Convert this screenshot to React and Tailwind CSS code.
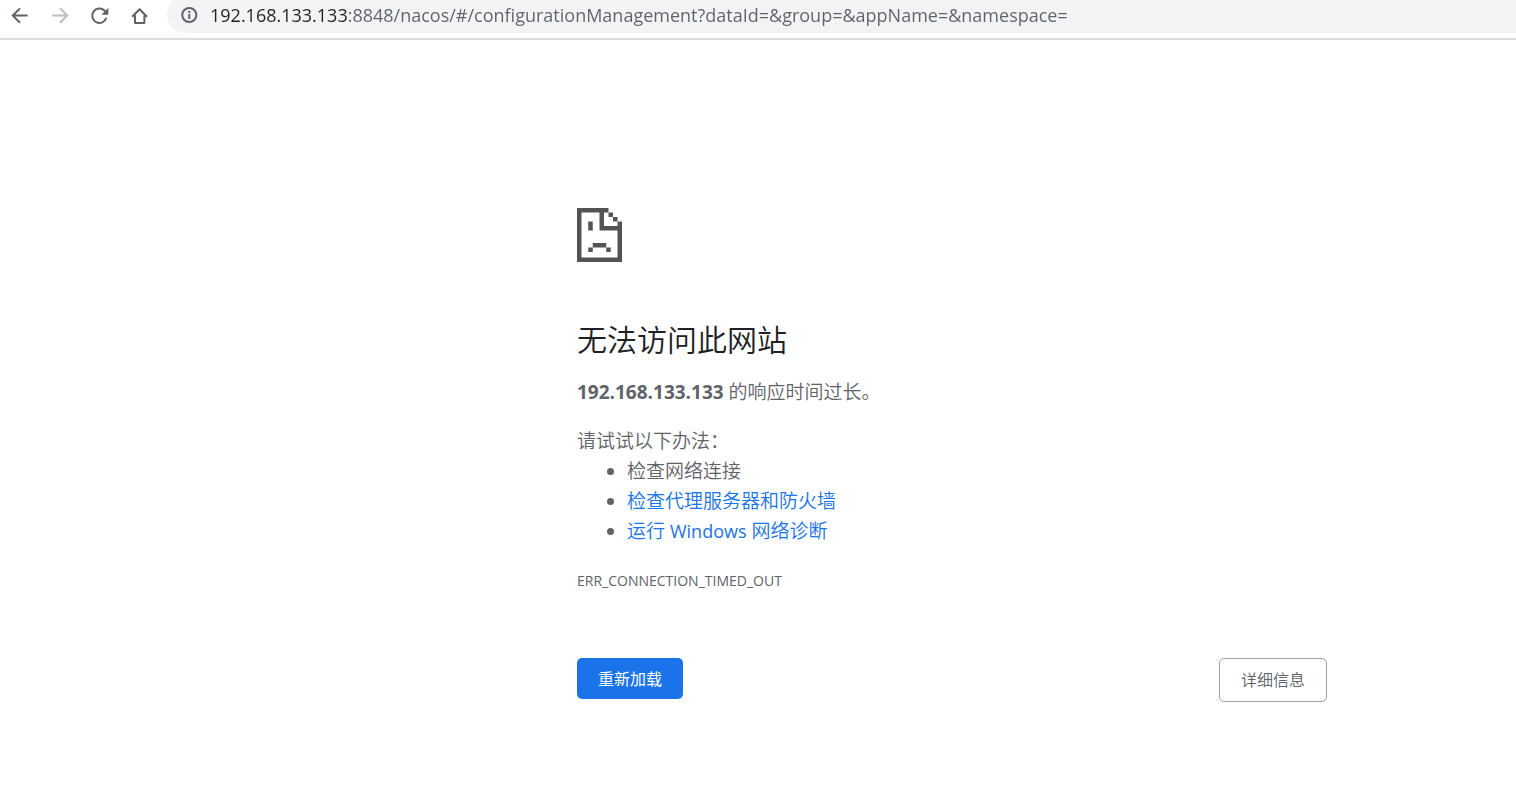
const HOST = "192.168.133.133";
const URL_TEXT =
  HOST + ":8848/nacos/#/configurationManagement?dataId=&group=&appName=&namespace=";

function ArrowIcon({ className }) {
  return (
    <svg viewBox="0 0 20 20" className={className} fill="none" stroke="currentColor" strokeWidth="2" aria-hidden="true">
      <path d="M17.6 9.6H3M10 2.4 2.8 9.6l7.2 7.2" />
    </svg>
  );
}

function ReloadIcon() {
  return (
    <svg viewBox="0 0 20 20" className="size-5" fill="none" aria-hidden="true">
      <path d="M16.3 11.8A7.2 7.2 0 1 1 14.4 4.5L16 6.1" stroke="currentColor" strokeWidth="2" />
      <path d="M18.3 1.8V8.8H11.3Z" fill="currentColor" />
    </svg>
  );
}

function HomeIcon() {
  return (
    <svg viewBox="0 0 20 20" className="size-5" fill="none" stroke="currentColor" strokeWidth="2" strokeLinejoin="round" aria-hidden="true">
      <path d="M2.2 10.8 9.6 3.2l7.4 7.6M5 9.2V17h9.4V9.2" />
    </svg>
  );
}

function InfoIcon() {
  return (
    <svg viewBox="0 0 20 20" className="size-5 shrink-0" aria-hidden="true">
      <circle cx="10.3" cy="10" r="7.1" fill="none" stroke="currentColor" strokeWidth="2" />
      <path d="M9.3 9h2v5h-2zM9.3 6h2v2h-2z" fill="currentColor" />
    </svg>
  );
}

function SadPageIcon() {
  return (
    <svg viewBox="0 0 20 24" className="h-[54px] w-[45px] text-[#535353]" fill="currentColor" aria-hidden="true">
      <path d="M0 0H14V2H12V8H18V6H20V24H0ZM2 2V22H18V10H10V2Z" fillRule="evenodd" />
      <path d="M14 2h2v2h-2zM16 4h2v2h-2zM5 6h2v4H5zM7 15.6h6v2H7zM5 17.6h2v2H5zM13 17.6h2v2h-2z" />
    </svg>
  );
}

function BrowserBar() {
  return (
    <header className="flex h-10 items-start overflow-hidden border-b-2 border-[#dadce0] bg-white text-[#5f6368]">
      <nav className="flex h-8 shrink-0 items-center" aria-label="Browser">
        <button type="button" aria-label="Back" className="flex w-10 justify-center">
          <ArrowIcon className="size-5" />
        </button>
        <button type="button" aria-label="Forward" disabled className="flex w-10 justify-center text-[#babcbe]">
          <ArrowIcon className="size-5 -scale-x-100" />
        </button>
        <button type="button" aria-label="Reload" className="flex w-10 justify-center">
          <ReloadIcon />
        </button>
        <button type="button" aria-label="Home" className="flex w-10 justify-center">
          <HomeIcon />
        </button>
      </nav>
      <div className="-mt-1 ml-[7px] flex h-[37px] min-w-0 grow items-center gap-[11px] rounded-l-full bg-[#f1f3f4] pl-3">
        <InfoIcon />
        <input
          type="text"
          aria-label="Address"
          defaultValue={URL_TEXT}
          spellCheck={false}
          className="h-8 min-w-0 grow bg-[linear-gradient(90deg,#202124_138px,#5f6368_138px)] bg-clip-text font-['Open_Sans','Noto_Sans_CJK_SC',sans-serif] text-[18px] font-normal text-transparent outline-none"
        />
      </div>
    </header>
  );
}

export default function App() {
  return (
    <div className="min-h-screen bg-white font-['Open_Sans','Noto_Sans_CJK_SC',sans-serif] text-[19px] leading-[30px] font-[350] text-[#5f6368]">
      <BrowserBar />
      <main className="w-full max-w-[1327px] pt-[168px] pb-12 pl-[577px]">
        <SadPageIcon />
        <h1 className="mt-[60px] text-[30px] leading-9 text-[#202124]">无法访问此网站</h1>
        <p className="mt-[19px]">
          <strong className="font-bold">{HOST}</strong> 的响应时间过长。
        </p>
        <p className="mt-[19px]">请试试以下办法：</p>
        <ul className="list-disc pl-[50px]">
          <li>检查网络连接</li>
          <li>
            <a href="#proxy" className="text-[#1a73e8]">检查代理服务器和防火墙</a>
          </li>
          <li>
            <a href="#diagnose" className="text-[#1a73e8]">
              运行 <span className="text-[18px] font-normal">Windows</span> 网络诊断
            </a>
          </li>
        </ul>
        <p className="mt-5 text-[14px] font-normal">ERR_CONNECTION_TIMED_OUT</p>
        <div className="mt-[62px] flex items-start justify-between text-[16px]">
          <button type="button" className="h-[41px] rounded-[5px] bg-[#1a73e8] px-[21px] font-normal text-white">
            重新加载
          </button>
          <button type="button" className="h-11 rounded-[5px] border border-[#9aa0a6] px-[21px]">
            详细信息
          </button>
        </div>
      </main>
    </div>
  );
}
